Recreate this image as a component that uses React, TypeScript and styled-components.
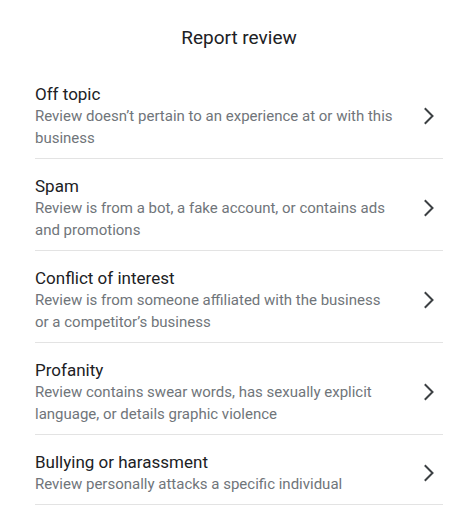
import React from "react";
import styled, { createGlobalStyle } from "styled-components";

const GlobalStyle = createGlobalStyle`
  html, body {
    margin: 0;
    padding: 0;
    background: #ffffff;
    font-family: Roboto, "Liberation Sans", Arial, sans-serif;
  }
`;

interface ReasonItem {
  title: string;
  description: string;
}

const reasons: ReasonItem[] = [
  {
    title: "Off topic",
    description:
      "Review doesn\u2019t pertain to an experience at or with this business",
  },
  {
    title: "Spam",
    description:
      "Review is from a bot, a fake account, or contains ads and promotions",
  },
  {
    title: "Conflict of interest",
    description:
      "Review is from someone affiliated with the business or a competitor\u2019s business",
  },
  {
    title: "Profanity",
    description:
      "Review contains swear words, has sexually explicit language, or details graphic violence",
  },
  {
    title: "Bullying or harassment",
    description: "Review personally attacks a specific individual",
  },
];

const Chevron = () => (
  <svg width="12" height="18" viewBox="0 0 12 18" fill="none">
    <polyline
      points="2.5,2 9.5,9 2.5,16"
      stroke="#3c4043"
      strokeWidth="2"
      strokeLinecap="square"
      strokeLinejoin="miter"
    />
  </svg>
);

const App = () => {
  return (
    <>
      <GlobalStyle />
      <Page>
        <Header>Report review</Header>
        <List>
          {reasons.map((r) => (
            <Row key={r.title}>
              <Text>
                <Title>{r.title}</Title>
                <Description>{r.description}</Description>
              </Text>
              <IconBox>
                <Chevron />
              </IconBox>
            </Row>
          ))}
        </List>
      </Page>
    </>
  );
};

export default App;

const Page = styled.div`
  width: 474px;
  min-height: 515px;
  box-sizing: border-box;
  padding: 0 31px 0 35px;
`;

const Header = styled.h1`
  margin: 0;
  padding: 26px 0 0;
  height: 41px;
  font-size: 19px;
  font-weight: 400;
  line-height: 24px;
  color: #202124;
  text-align: center;
`;

const List = styled.div`
  display: flex;
  flex-direction: column;
`;

const Row = styled.div`
  display: flex;
  align-items: center;
  padding: 16px 0 9px;
  border-bottom: 1px solid #e3e3e3;
`;

const Text = styled.div`
  flex: 1;
  max-width: 359px;
`;

const Title = styled.div`
  font-size: 17px;
  line-height: 22px;
  color: #202124;
`;

const Description = styled.div`
  font-size: 15px;
  line-height: 22px;
  color: #70757a;
`;

const IconBox = styled.div`
  margin-left: auto;
  margin-right: 8px;
  display: flex;
  align-items: center;
`;
